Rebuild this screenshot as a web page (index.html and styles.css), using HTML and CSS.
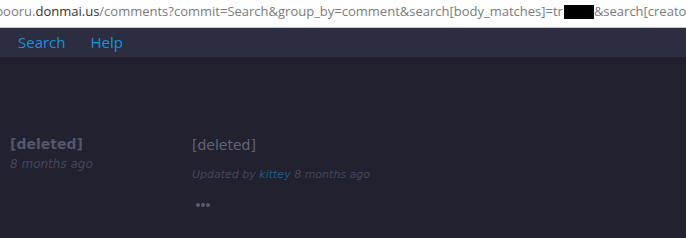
FILE: index.html
```html
<!DOCTYPE html>
<html>
<head>
<meta charset="utf-8">
<link rel="stylesheet" href="styles.css">
</head>
<body>
<div class="urlbar">
  <div class="url"><span class="dim">danbooru.</span><span class="host">donmai.us</span><span class="dim">/comments?commit=Search&amp;group_by=comment&amp;search[body_matches]=tr<span class="redact"></span>&amp;search[creator_name]=</span></div>
</div>
<nav class="nav">
  <a href="#">Search</a>
  <a href="#">Help</a>
</nav>
<main class="content">
  <div class="comment">
    <div class="author">
      <div class="name">[deleted]</div>
      <div class="time">8 months ago</div>
    </div>
    <div class="body">
      <div class="text">[deleted]</div>
      <div class="meta">Updated by <a href="#">kittey</a> 8 months ago</div>
      <div class="more" title="more"><span class="dot"></span><span class="dot"></span><span class="dot"></span></div>
    </div>
  </div>
</main>
</body>
</html>
```
FILE: styles.css
```css
html, body { margin: 0; padding: 0; }
body {
  background: #21212f;
  font-family: "DejaVu Sans", sans-serif;
  width: 686px;
  height: 238px;
  overflow: hidden;
}
.urlbar {
  background: #fff;
  height: 22px;
  border-bottom: 1px solid #c9c9c9;
  padding-bottom: 5px;
  overflow: hidden;
}
.url {
  font-family: "Open Sans", sans-serif;
  font-size: 13px;
  line-height: 22px;
  white-space: nowrap;
  margin-left: -28px;
  color: #7b7b7b;
}
.host { color: #333; }
.redact {
  display: inline-block;
  width: 30px;
  height: 14px;
  margin-left: 1px;
  vertical-align: -3px;
  background: #000;
}
.nav {
  background: #2c2d40;
  height: 27px;
  padding-bottom: 2px;
  display: flex;
  align-items: center;
  padding-left: 18px;
  gap: 25px;
  font-family: "Open Sans", sans-serif;
  font-size: 15px;
}
.nav a { color: #1793d8; text-decoration: none; }
.content { padding: 79px 10px 0; }
.comment { display: flex; }
.author { width: 182px; }
.name { color: #55566a; font-weight: bold; font-size: 14px; line-height: 17px; }
.time { color: #45465a; font-style: italic; font-size: 12px; line-height: 16px; margin-top: 3px; }
.text { color: #626377; font-size: 14px; line-height: 17px; margin-top: 1px; }
.meta { color: #45465a; font-style: italic; font-size: 11px; line-height: 13px; margin-top: 14px; }
.meta a { color: #1c5d85; text-decoration: none; }
.more { display: flex; gap: 1px; margin-top: 22px; padding-left: 4px; }
.dot { width: 4px; height: 4px; border-radius: 50%; background: #5a5b6e; }
```
